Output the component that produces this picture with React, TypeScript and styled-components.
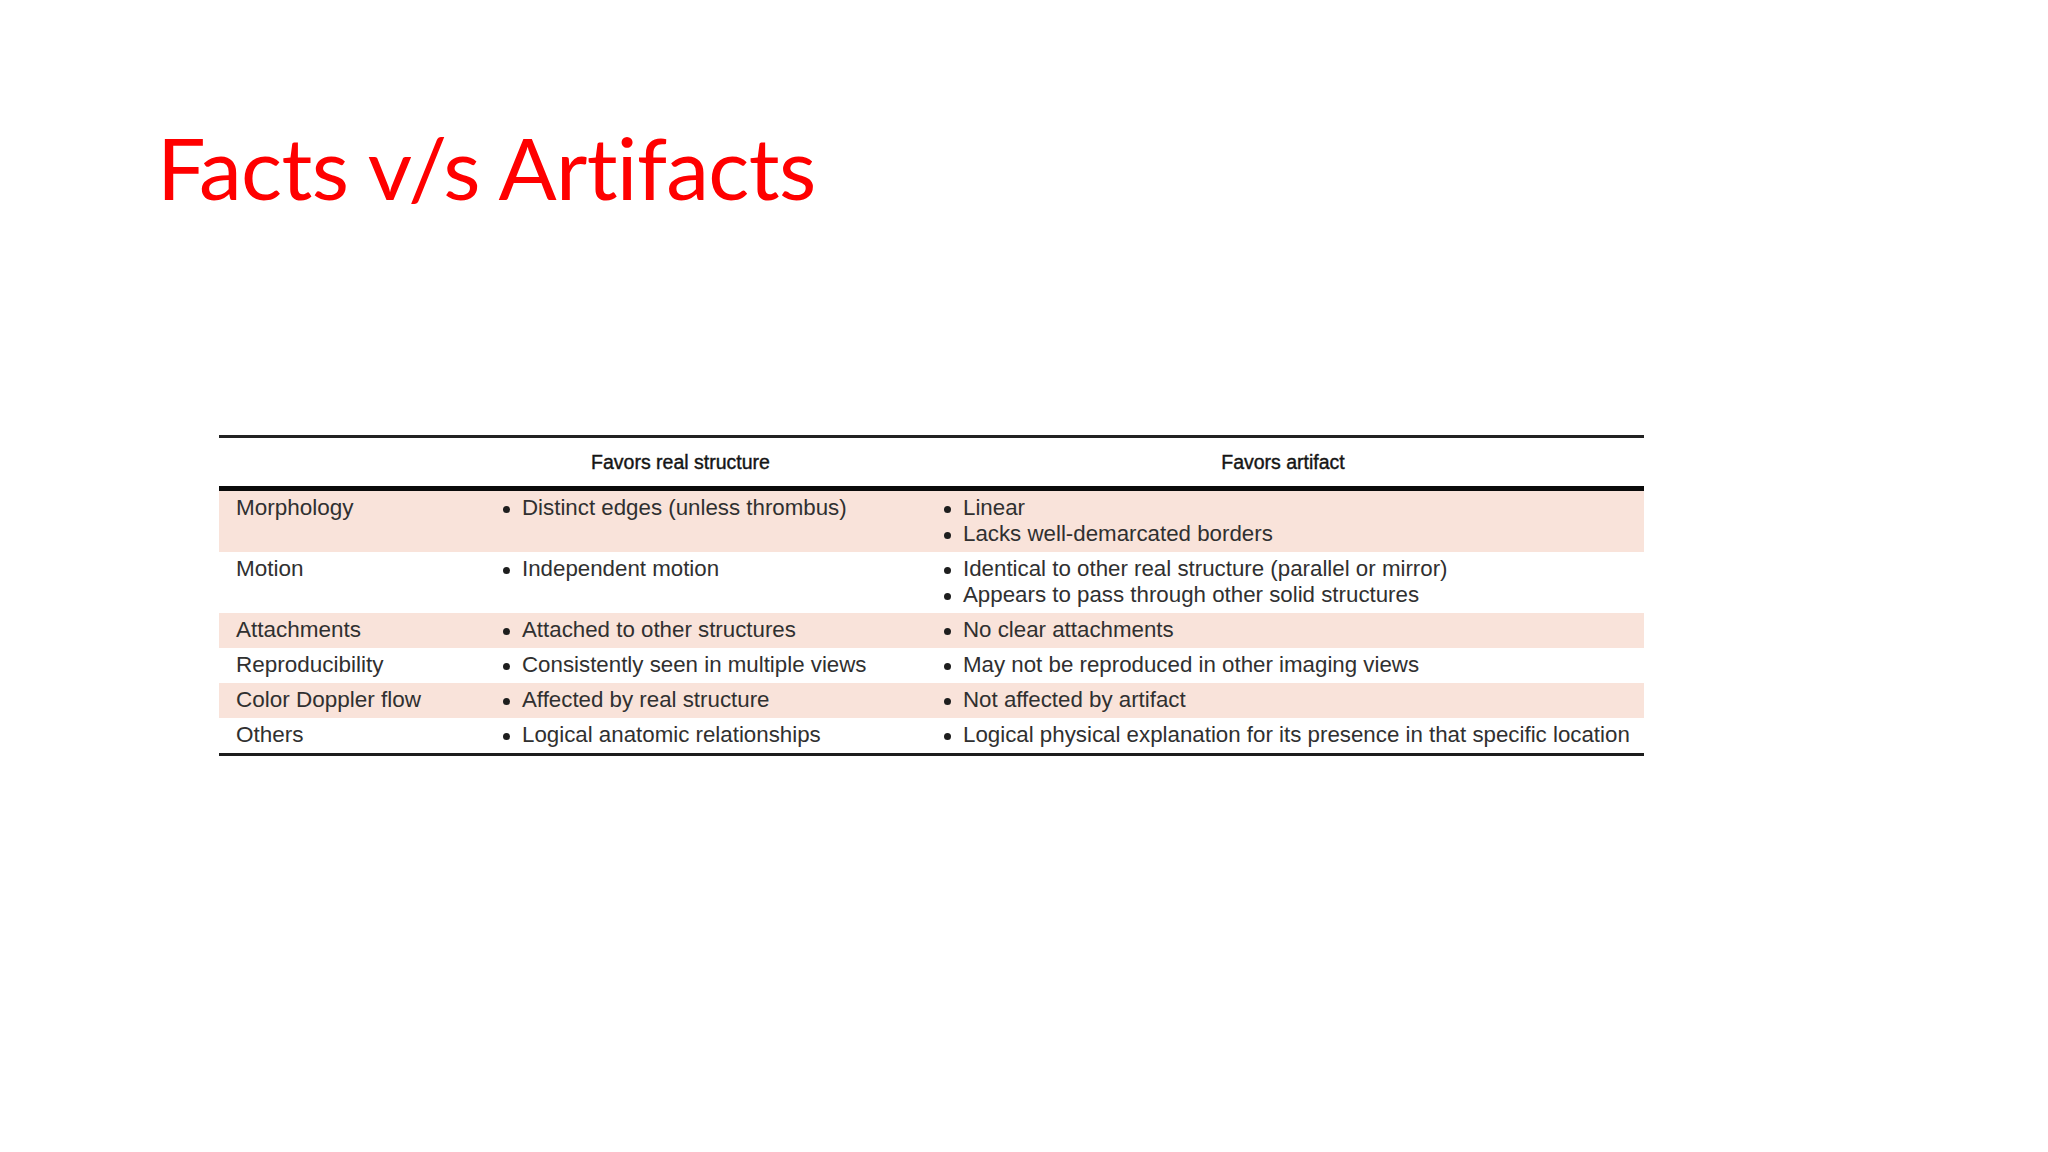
import React from "react";
import styled, { createGlobalStyle } from "styled-components";

const GlobalStyle = createGlobalStyle`
  html, body {
    margin: 0;
    padding: 0;
    background: #ffffff;
  }
`;

const Slide = styled.div`
  width: 2048px;
  height: 1152px;
  box-sizing: border-box;
  padding: 112px 0 0 0;
  background: #ffffff;
  overflow: hidden;
`;

const Title = styled.h1`
  margin: 0 0 0 157px;
  font-family: Lato, "Open Sans", sans-serif;
  font-weight: 400;
  font-size: 86px;
  line-height: 110px;
  color: #ff0000;
  letter-spacing: -0.6px;
`;

const Table = styled.div`
  margin: 213px 0 0 219px;
  width: 1425px;
  border-top: 3px solid #222222;
  border-bottom: 3px solid #1c1c1c;
  font-family: "Liberation Sans", Arial, sans-serif;
  color: #303030;
`;

const Row = styled.div<{ $shaded?: boolean }>`
  display: grid;
  grid-template-columns: 270px 441px 1fr;
  background: ${(p) => (p.$shaded ? "#f9e3da" : "#ffffff")};
`;

const HeadRow = styled(Row)`
  height: 48px;
  align-items: center;
  border-bottom: 5px solid #0a0a0a;
`;

const HeadCell = styled.div<{ $shift?: number }>`
  text-align: center;
  font-size: 19.5px;
  color: #151515;
  -webkit-text-stroke: 0.4px #151515;
  padding-right: ${(p) => p.$shift ?? 0}px;
`;

const Label = styled.div`
  padding: 4px 0 5px 17px;
  font-size: 22.5px;
  line-height: 26px;
`;

const List = styled.ul`
  list-style: none;
  margin: 0;
  padding: 4px 0 5px 13px;
`;

const Item = styled.li`
  display: flex;
  align-items: center;
  font-size: 22.3px;
  line-height: 26px;
  white-space: nowrap;

  &::before {
    content: "";
    width: 7px;
    height: 7px;
    margin: 2px 12px 0 1px;
    flex: none;
    border-radius: 50%;
    background: #1e1e1e;
  }
`;

type Entry = {
  label: string;
  real: string[];
  artifact: string[];
  shaded: boolean;
};

const rows: Entry[] = [
  {
    label: "Morphology",
    real: ["Distinct edges (unless thrombus)"],
    artifact: ["Linear", "Lacks well-demarcated borders"],
    shaded: true,
  },
  {
    label: "Motion",
    real: ["Independent motion"],
    artifact: [
      "Identical to other real structure (parallel or mirror)",
      "Appears to pass through other solid structures",
    ],
    shaded: false,
  },
  {
    label: "Attachments",
    real: ["Attached to other structures"],
    artifact: ["No clear attachments"],
    shaded: true,
  },
  {
    label: "Reproducibility",
    real: ["Consistently seen in multiple views"],
    artifact: ["May not be reproduced in other imaging views"],
    shaded: false,
  },
  {
    label: "Color Doppler flow",
    real: ["Affected by real structure"],
    artifact: ["Not affected by artifact"],
    shaded: true,
  },
  {
    label: "Others",
    real: ["Logical anatomic relationships"],
    artifact: [
      "Logical physical explanation for its presence in that specific location",
    ],
    shaded: false,
  },
];

export default function App() {
  return (
    <>
      <GlobalStyle />
      <Slide>
        <Title>Facts v/s Artifacts</Title>
        <Table>
          <HeadRow>
            <div />
            <HeadCell $shift={58}>Favors real structure</HeadCell>
            <HeadCell $shift={8}>Favors artifact</HeadCell>
          </HeadRow>
          {rows.map((r) => (
            <Row key={r.label} $shaded={r.shaded}>
              <Label>{r.label}</Label>
              <List>
                {r.real.map((t) => (
                  <Item key={t}>{t}</Item>
                ))}
              </List>
              <List>
                {r.artifact.map((t) => (
                  <Item key={t}>{t}</Item>
                ))}
              </List>
            </Row>
          ))}
        </Table>
      </Slide>
    </>
  );
}
